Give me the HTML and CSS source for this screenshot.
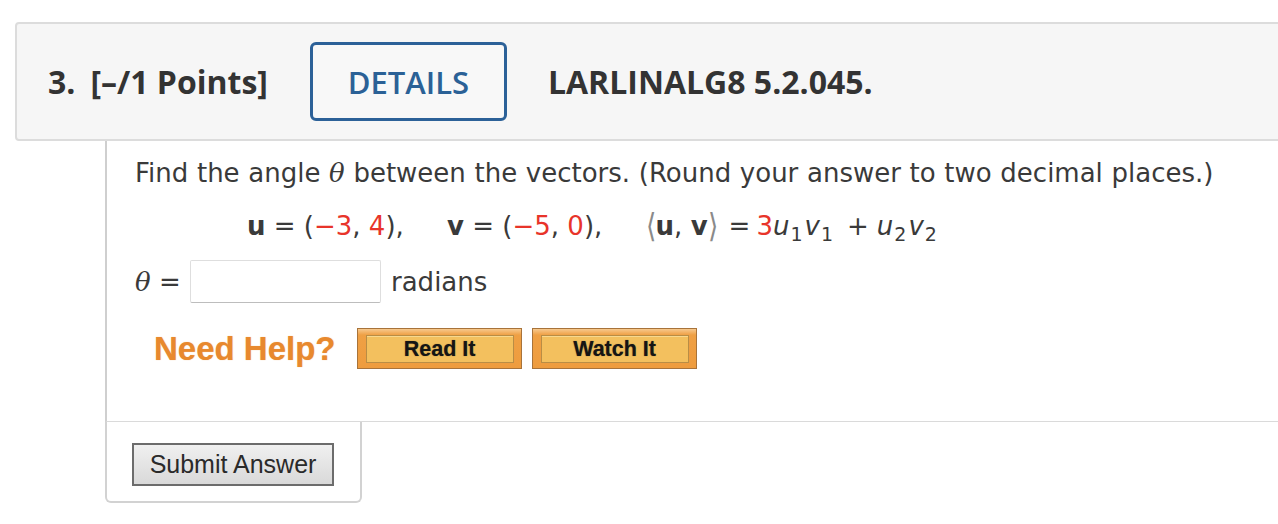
FILE: index.html
```html
<!DOCTYPE html>
<html lang="en">
<head>
<meta charset="utf-8">
<title>Question 3</title>
<link rel="stylesheet" href="styles.css">
</head>
<body>
<div class="page">
  <div class="qhead">
    <span class="qnum">3.</span>
    <span class="points">[–/1 Points]</span>
    <span class="details">DETAILS</span>
    <span class="ref">LARLINALG8 5.2.045.</span>
  </div>
  <div class="qbody">
    <div class="row row1">Find the angle <i class="theta">θ</i> between the vectors. (Round your answer to two decimal places.)</div>
    <div class="row row2">
      <span class="part"><b>u</b> = (<span class="red">−3</span>, <span class="red">4</span>),</span>
      <span class="part p2"><b>v</b> = (<span class="red">−5</span>, <span class="red">0</span>),</span>
      <span class="part p3"><span class="ang">⟨</span><b>u</b>, <b>v</b><span class="ang">⟩</span><span class="eq">=</span><span class="red">3</span><i>u</i><sub>1</sub><i>v</i><sub>1</sub><span class="plus">+</span><i>u</i><sub>2</sub><i>v</i><sub>2</sub></span>
    </div>
    <div class="row row3">
      <span class="tlabel"><i class="theta">θ</i> =</span>
      <span class="answer"></span>
      <span class="unit">radians</span>
    </div>
    <div class="row row4">
      <span class="needhelp">Need Help?</span>
      <span class="hbtn"><span class="hin">Read It</span></span>
      <span class="hbtn"><span class="hin">Watch It</span></span>
    </div>
  </div>
  <div class="submitbox">
    <span class="submit">Submit Answer</span>
  </div>
</div>
</body>
</html>
```
FILE: styles.css
```css
html, body {
  margin: 0;
  padding: 0;
  background: #fff;
  overflow: hidden;
}
.page {
  margin: 22px 0 0 15px;
  width: 1320px;
}
.qhead {
  box-sizing: border-box;
  height: 119px;
  background: #f6f6f6;
  border: 2px solid #dcdcdc;
  border-radius: 4px;
  display: flex;
  align-items: center;
  padding-left: 31px;
  font-family: "Open Sans", sans-serif;
  font-weight: 700;
  font-size: 32px;
  color: #333;
}
.points {
  margin-left: 15px;
}
.details {
  box-sizing: border-box;
  width: 197px;
  height: 79px;
  margin-left: 42px;
  border: 3px solid #2c6198;
  border-radius: 6px;
  display: flex;
  align-items: center;
  justify-content: center;
  color: #2b6196;
  font-weight: 600;
  font-size: 31px;
  background: #f8f8f8;
}
.ref {
  margin-left: 41px;
}
.qbody {
  margin-left: 90px;
  border-left: 2px solid #cfcfcf;
  border-bottom: 1px solid #dadada;
  padding: 14px 0 52px 28px;
  font-family: "DejaVu Sans", Verdana, sans-serif;
  font-size: 26px;
  color: #3a3a3a;
}
.row {
  line-height: 36px;
  height: 36px;
  white-space: nowrap;
}
.row1 {
  word-spacing: 0.4px;
}
.theta {
  font-family: "DejaVu Serif", serif;
  font-style: italic;
}
.row2 {
  margin-top: 17px;
  padding-left: 112px;
}
.row2 b {
  font-weight: 700;
}
.row2 i {
  font-family: "DejaVu Sans", sans-serif;
  font-style: oblique;
}
.part {
  display: inline-block;
}
.p2 {
  margin-left: 35px;
}
.p3 {
  margin-left: 35px;
}
.ang {
  color: #8a8a8a;
  font-weight: 300;
  transform: scaleY(1.25);
  display: inline-block;
}
.eq {
  margin: 0 6px 0 11px;
}
.plus {
  margin: 0 8px 0 12px;
}
sub {
  font-size: 19px;
  line-height: 0;
  vertical-align: -6px;
  margin: 0 2px 0 1px;
}
.red {
  color: #e8342a;
}
.row3 {
  margin-top: 16px;
  height: 43px;
  display: flex;
  align-items: center;
}
.tlabel {
  width: 55px;
}
.answer {
  box-sizing: border-box;
  width: 191px;
  height: 43px;
  border: 1px solid #dedede;
  border-bottom-color: #bdbdbd;
  border-radius: 2px;
  background: #fff;
}
.unit {
  margin-left: 10px;
}
.row4 {
  margin-top: 25px;
  height: 41px;
  display: flex;
  align-items: center;
  padding-left: 19px;
}
.needhelp {
  font-family: "Liberation Sans", Arial, sans-serif;
  font-weight: 700;
  font-size: 33px;
  color: #e8892e;
  text-shadow: 0 0 1px rgba(232,137,46,0.6);
  margin-right: 21px;
}
.hbtn {
  box-sizing: border-box;
  width: 165px;
  height: 41px;
  margin-right: 10px;
  border: 1px solid #a8733a;
  background: linear-gradient(#f7c98e 0, #efa044 6px, #ee9c3e 100%);
  padding: 6px 7px 5px 8px;
  display: flex;
}
.hin {
  flex: 1;
  border: 1px solid #b98d45;
  background: #f3c05e;
  box-shadow: inset 0 1px 0 #f8d88e;
  display: flex;
  align-items: center;
  justify-content: center;
  font-family: "Liberation Sans", Arial, sans-serif;
  font-weight: 700;
  font-size: 21.5px;
  color: #151515;
  text-shadow: 0 0 1px rgba(0,0,0,0.5);
}
.submitbox {
  box-sizing: border-box;
  margin-left: 90px;
  width: 257px;
  border: 2px solid #d2d2d2;
  border-top: 0;
  border-radius: 0 0 6px 6px;
  padding: 21px 0 15px 25px;
}
.submit {
  box-sizing: border-box;
  display: flex;
  align-items: center;
  justify-content: center;
  width: 202px;
  height: 43px;
  border: 2px solid #6c6c6c;
  background: linear-gradient(#f0f0f0, #d9d9d9);
  font-family: "Liberation Sans", Arial, sans-serif;
  font-size: 25px;
  color: #2a2a2a;
}
```
